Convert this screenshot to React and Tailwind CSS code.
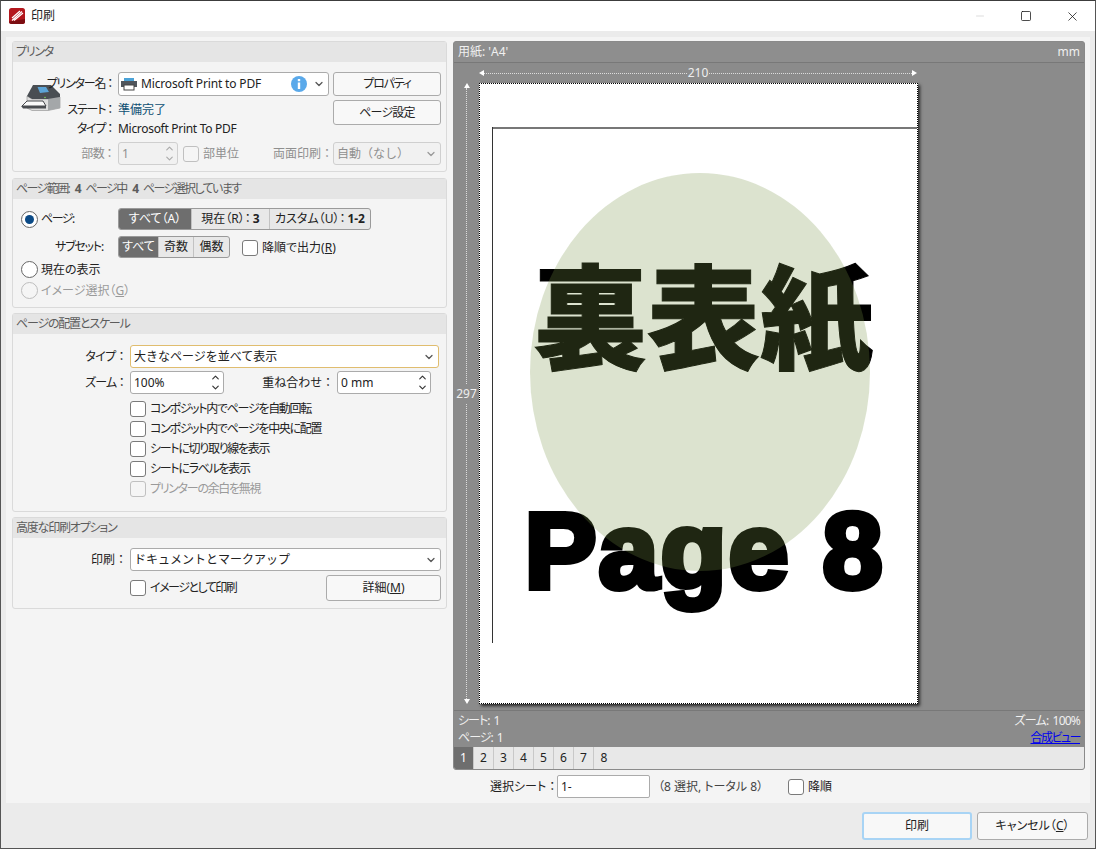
import { ChevronDown, ChevronUp, Minus, Square, X } from "lucide-react";

const FONT = "font-['Noto_Sans','Noto_Sans_CJK_JP',sans-serif] [font-feature-settings:'palt']";

const SHEETS = [1, 2, 3, 4, 5, 6, 7, 8];

const CHECKS = [
  { label: "コンポジット内でページを自動回転", h: "h-[20px]" },
  { label: "コンポジット内でページを中央に配置", h: "h-[20px]" },
  { label: "シートに切り取り線を表示", h: "h-[20px]" },
  { label: "シートにラベルを表示", h: "h-[19px]" },
  { label: "プリンターの余白を無視", h: "h-[22px]", disabled: true },
];

function AppIcon() {
  return (
    <svg width="16" height="16" viewBox="0 0 16 16" className="shrink-0">
      <rect width="16" height="16" rx="2.5" fill="#b3171d" />
      <path d="M0 13.5C0 15 1 16 2.5 16h11c1.500 0 2.500-1 2.500-2.500V11L0 13.500z" fill="#7c0e12" />
      <path d="M3 12.500 13 3.500M5 12.500 14 5M3 10 11 3" stroke="#fff" strokeWidth="1.200" fill="none" />
    </svg>
  );
}

function PrinterIcon() {
  return (
    <svg width="42" height="26" viewBox="0 0 42 26">
      <path d="M7 11 12 14H28L40 12V23L28 25.500H12L7 23z" fill="#dedede" stroke="#8a8a8a" strokeWidth="0.600" />
      <path d="M28 14 40 12V23L28 25.500z" fill="#a4a7a9" />
      <path d="M13 0H31L40 9V12L28 14H12L7 11z" fill="#494e53" />
      <path d="M17.500 2H26L29 7 20 8z" fill="#5ba3d6" />
      <circle cx="25" cy="12.500" r="0.800" fill="#7ed957" />
      <path d="M7 16H23L26 21H2z" fill="#fafafa" stroke="#33363a" strokeWidth="0.900" />
      <path d="M1 21H26V23.500H3z" fill="#4a4d51" />
    </svg>
  );
}

function TinyPrinter() {
  return (
    <svg width="16" height="14" viewBox="0 0 16 14" className="shrink-0">
      <rect x="3" y="1" width="10" height="3" fill="#4ba3d8" />
      <rect x="0" y="4" width="16" height="6" fill="#50565c" />
      <rect x="3" y="8" width="10" height="5" fill="#fff" stroke="#444" strokeWidth="1" />
    </svg>
  );
}

function InfoDot() {
  return (
    <svg width="16" height="16" viewBox="0 0 16 16" className="mr-[6px] shrink-0">
      <circle cx="8" cy="8" r="8" fill="#5aa9ea" />
      <rect x="6.800" y="3" width="2.400" height="2.200" fill="#fff" />
      <rect x="6.800" y="6.500" width="2.400" height="6.500" fill="#fff" />
    </svg>
  );
}

function Group({ title, className, children }) {
  return (
    <section className={`rounded-[3px] border border-[#dadada] bg-[#f4f4f4] ${className}`}>
      <div className="flex h-[20px] items-center bg-[#e5e5e5] pl-[3px] text-[12px] tracking-[-1.2px] text-[#5c5c5c]">
        {title}
      </div>
      {children}
    </section>
  );
}

function Check({ label, disabled, className = "" }) {
  return (
    <label className={`flex items-center gap-[4px] text-[12px] ${disabled ? "text-[#9a9a9a]" : "text-[#222]"} ${className}`}>
      <span className={`h-[16px] w-[16px] shrink-0 rounded-[3px] border ${disabled ? "border-[#c0c0c0] bg-[#f5f5f5]" : "border-[#7a7a7a] bg-white"}`} />
      <span>{label}</span>
    </label>
  );
}

function Radio({ label, checked, disabled }) {
  return (
    <div className={`flex items-center gap-[3px] text-[12px] ${disabled ? "text-[#9a9a9a]" : "text-[#222]"}`}>
      <span className={`flex h-[17px] w-[17px] shrink-0 items-center justify-center rounded-full border ${disabled ? "border-[#bdbdbd] bg-[#f5f5f5]" : "border-[#666] bg-white"}`}>
        {checked && <span className="h-[9px] w-[9px] rounded-full bg-[#0b4a86]" />}
      </span>
      <span>{label}</span>
    </div>
  );
}

function Select({ children, className = "", disabled, focus }) {
  return (
    <div
      className={`flex items-center rounded-[3px] border pl-[3px] pr-[3px] text-[12px] [font-feature-settings:normal] ${
        disabled
          ? "border-[#cfcfcf] bg-[#f1f1f1] text-[#8f8f8f]"
          : focus
            ? "border-[#e0bd6f] bg-white text-[#222]"
            : "border-[#ababab] bg-white text-[#222]"
      } ${className}`}
    >
      <span className="flex min-w-0 flex-1 items-center gap-[2px]">{children}</span>
      <ChevronDown size={12} strokeWidth={2.500} className={disabled ? "text-[#999]" : "text-[#555]"} />
    </div>
  );
}

function Spin({ value, className = "", disabled }) {
  return (
    <div
      className={`flex items-center rounded-[3px] border pl-[3px] pr-[2px] text-[12px] ${
        disabled ? "border-[#cfcfcf] bg-[#f1f1f1] text-[#8f8f8f]" : "border-[#ababab] bg-white text-[#222]"
      } ${className}`}
    >
      <span className="flex-1">{value}</span>
      <span className={`flex flex-col ${disabled ? "text-[#aaa]" : "text-[#333]"}`}>
        <ChevronUp size={11} strokeWidth={2.500} className="-mb-[1px]" />
        <ChevronDown size={11} strokeWidth={2.500} />
      </span>
    </div>
  );
}

function Btn({ children, className = "" }) {
  return (
    <button className={`flex items-center justify-center rounded-[3px] border border-[#ababab] bg-[#f8f8f8] text-[12px] text-[#222] ${className}`}>
      {children}
    </button>
  );
}

function Segments({ items, className = "" }) {
  return (
    <div className={`flex h-[22px] overflow-hidden rounded-[3px] border border-[#9a9a9a] bg-[#e8e8e8] text-[12px] text-[#222] ${className}`}>
      {items.map((item, i) => (
        <span
          key={item.label}
          className={`flex items-center justify-center border-l ${item.w} ${
            i === 0 ? "border-l-0 bg-[#6e6e6e] text-white" : "border-[#c2c2c2]"
          }`}
        >
          {item.label}
          {item.count && <b className="ml-[2px] font-bold">{item.count}</b>}
        </span>
      ))}
    </div>
  );
}

function PrinterGroup() {
  return (
    <Group title="プリンタ" className="h-[131px]">
      <div className="relative grid grid-cols-[101px_211px_108px] grid-rows-[24px_23px_19px_27px] gap-x-[4px] pt-[10px]">
        <div className="absolute left-[7px] top-[23px]">
          <PrinterIcon />
        </div>
        <div className="relative flex items-center justify-end pr-[2px] text-[12px] tracking-[-1.2px] text-[#222]">プリンター名 ：</div>
        <Select>
          <span className="-ml-[1px]">
            <TinyPrinter />
          </span>
          <span className="ml-[2px] flex-1 tracking-[-0.15px]">Microsoft Print to PDF</span>
          <InfoDot />
        </Select>
        <Btn className="tracking-[-1.2px]">プロパティ</Btn>

        <div className="mt-[4px] flex items-center justify-end pr-[2px] text-[12px] tracking-[-1.2px] text-[#222]">ステート ：</div>
        <div className="mt-[4px] flex items-center text-[12px] text-[#0c4f72]">準備完了</div>
        <Btn className="row-span-2 mt-[4px] h-[25px] tracking-[-0.8px]">ページ設定</Btn>

        <div className="flex items-center justify-end pr-[2px] text-[12px] tracking-[-1.2px] text-[#222]">タイプ ：</div>
        <div className="flex items-center text-[12px] tracking-[-0.3px] text-[#222]">Microsoft Print To PDF</div>

        <div className="col-span-3 mt-[4px] flex h-[23px] items-center text-[12px] text-[#8f8f8f]">
          <span className="w-[101px] pr-[2px] text-right tracking-[-0.6px]">部数 ：</span>
          <span className="w-[4px]" />
          <Spin value="1" disabled className="h-[23px] w-[60px]" />
          <Check label="部単位" disabled className="ml-[5px] w-[87px] !text-[#8f8f8f]" />
          <span className="w-[63px] pr-[3px] text-right">両面印刷 ：</span>
          <Select disabled className="h-[23px] w-[108px]">自動（なし）</Select>
        </div>
      </div>
    </Group>
  );
}

function RangeGroup() {
  return (
    <Group
      title={
        <span className="tracking-[-1.6px] [word-spacing:4px]">
          ページ範囲: <b>4</b> ページ中 <b>4</b> ページ選択しています
        </span>
      }
      className="mt-[6px] h-[130px]"
    >
      <div className="flex flex-col pl-[8px] pt-[9px]">
        <div className="flex h-[22px] items-center">
          <div className="w-[97px] tracking-[-1.5px]">
            <Radio label="ページ:" checked />
          </div>
          <Segments
            items={[
              { label: "すべて（A）", w: "w-[72px]" },
              { label: "現在（R）：", count: "3", w: "w-[78px]" },
              { label: "カスタム（U）：", count: "1-2", w: "w-[101px]" },
            ]}
          />
        </div>
        <div className="mt-[6px] flex h-[22px] items-center">
          <span className="w-[97px] pl-[34px] text-[12px] tracking-[-1.2px] text-[#222]">サブセット:</span>
          <Segments
            items={[
              { label: "すべて", w: "w-[39px]" },
              { label: "奇数", w: "w-[35px]" },
              { label: "偶数", w: "w-[36px]" },
            ]}
          />
          <Check
            className="ml-[12px] pt-[1px]"
            label={
              <span>
                降順で出力(<u>R</u>)
              </span>
            }
          />
        </div>
        <div className="mt-[1px] flex h-[21px] items-center">
          <Radio label="現在の表示" />
        </div>
        <div className="flex h-[21px] items-center">
          <Radio
            disabled
            label={
              <span>
                イメージ選択（<u>G</u>）
              </span>
            }
          />
        </div>
      </div>
    </Group>
  );
}

function LayoutGroup() {
  return (
    <Group title="ページの配置とスケール" className="mt-[5px] h-[199px]">
      <div className="flex flex-col pl-[117px] pt-[11px] text-[12px] text-[#222]">
        <div className="flex h-[23px] items-center">
          <span className="-ml-[60px] w-[60px] pr-[6px] text-right tracking-[-0.5px]">タイプ ：</span>
          <Select focus className="h-[23px] w-[309px]">大きなページを並べて表示</Select>
        </div>
        <div className="mt-[3px] flex h-[23px] items-center">
          <span className="-ml-[60px] w-[60px] pr-[6px] text-right tracking-[-0.8px]">ズーム ：</span>
          <Spin value="100%" className="h-[23px] w-[94px]" />
          <span className="w-[113px] pr-[6px] text-right">重ね合わせ ：</span>
          <Spin value="0 mm" className="h-[23px] w-[94px]" />
        </div>
        <div className="mt-[5px] flex flex-col tracking-[-1.3px]">
          {CHECKS.map((c) => (
            <Check key={c.label} label={c.label} disabled={c.disabled} className={c.h} />
          ))}
        </div>
      </div>
    </Group>
  );
}

function AdvancedGroup() {
  return (
    <Group title="高度な印刷オプション" className="mt-[5px] h-[92px]">
      <div className="flex flex-col pl-[117px] pt-[10px] text-[12px] text-[#222]">
        <div className="flex h-[23px] items-center">
          <span className="-ml-[60px] w-[60px] pr-[6px] text-right">印刷 ：</span>
          <Select className="h-[23px] w-[311px]">ドキュメントとマークアップ</Select>
        </div>
        <div className="mt-[4px] flex h-[26px] w-[311px] items-start justify-between">
          <Check label="イメージとして印刷" className="mt-[4px] tracking-[-1.5px]" />
          <Btn className="h-[26px] w-[115px]">
            <span>
              詳細(<u>M</u>)
            </span>
          </Btn>
        </div>
      </div>
    </Group>
  );
}

function PaperPreview() {
  return (
    <div className="relative h-[621px] w-[439px] overflow-hidden border border-dotted border-black bg-white shadow-[2px_2px_3px_rgba(0,0,0,0.7)]">
      <div className="absolute left-[12px] top-[43px] h-[2px] w-[430px] bg-[#777]" />
      <div className="absolute left-[12px] top-[43px] h-[516px] w-[1px] bg-[#333]" />
      <div className="absolute inset-x-0 top-[157px] pl-[10px] text-center font-['Noto_Sans_CJK_JP',sans-serif] text-[113px] font-black leading-[140px] text-black [-webkit-text-stroke:1px_black]">
        裏表紙
      </div>
      <div className="absolute inset-x-0 top-[405px] pl-[12px] text-center font-['Liberation_Sans',sans-serif] text-[108px] font-bold leading-[124px] tracking-[2px] text-black [-webkit-text-stroke:6px_black]">
        Page 8
      </div>
      <div className="absolute left-[50px] top-[89px] h-[398px] w-[340px] rounded-[50%] bg-[rgba(119,146,69,0.26)]" />
    </div>
  );
}

function PreviewPanel() {
  return (
    <div className="flex h-[729px] w-[632px] flex-col overflow-hidden rounded-[3px] border border-[#8a8a8a] bg-[#8b8b8b] text-[12px]">
      <div className="flex h-[21px] shrink-0 items-center justify-between border-b border-[#787878] bg-[#8e8e8e] pl-[4px] pr-[4px] text-[#f0f0f0]">
        <span>用紙: 'A4'</span>
        <span>mm</span>
      </div>
      <div className="flex h-[648px] shrink-0 flex-col border-b border-[#787878]">
        <div className="ml-[25px] flex h-[20px] w-[438px] shrink-0 items-center text-[#eee]">
          <span className="h-0 w-0 border-y-[3px] border-r-[5px] border-y-transparent border-r-white" />
          <span className="flex-1 border-t border-dotted border-[#ddd]" />
          <span className="px-[1px]">210</span>
          <span className="flex-1 border-t border-dotted border-[#ddd]" />
          <span className="h-0 w-0 border-y-[3px] border-l-[5px] border-y-transparent border-l-white" />
        </div>
        <div className="flex">
          <div className="flex h-[621px] w-[25px] shrink-0 flex-col items-center text-[#eee]">
            <span className="h-0 w-0 border-x-[3px] border-b-[5px] border-x-transparent border-b-white" />
            <span className="flex-1 border-l border-dotted border-[#ddd]" />
            <span className="py-[1px]">297</span>
            <span className="flex-1 border-l border-dotted border-[#ddd]" />
            <span className="h-0 w-0 border-x-[3px] border-t-[5px] border-x-transparent border-t-white" />
          </div>
          <PaperPreview />
        </div>
      </div>
      <div className="flex h-[36px] shrink-0 items-start justify-between pl-[4px] pr-[4px] pt-[1px] leading-[17px] text-[#f0f0f0] [word-spacing:2px]">
        <div className="tracking-[-1px]">
          <div>シート: 1</div>
          <div>ページ: 1</div>
        </div>
        <div className="text-right tracking-[-0.8px]">
          <div>ズーム: 100%</div>
          <div className="tracking-[-1.5px] text-[#0000ee] underline">合成ビュー</div>
        </div>
      </div>
      <div className="flex h-[22px] shrink-0 bg-[#e8e8e8] text-[#222]">
        {SHEETS.map((n, i) => (
          <span
            key={n}
            className={`flex w-[20px] items-center justify-center border-r border-[#c8c8c8] ${
              i === 0 ? "bg-[#6e6e6e] text-white" : ""
            } ${i === 7 ? "border-r-0" : ""}`}
          >
            {n}
          </span>
        ))}
      </div>
    </div>
  );
}

export default function App() {
  return (
    <div className={`flex h-[849px] w-[1096px] flex-col overflow-hidden whitespace-nowrap border border-x-[#555] border-b-[#555] border-t-[#3c3c3c] bg-[#ebebeb] ${FONT}`}>
      {/* Title bar */}
      <div className="flex h-[30px] shrink-0 items-center bg-white pl-[8px] text-[12px] text-[#222]">
        <AppIcon />
        <span className="ml-[6px] flex-1">印刷</span>
        <div className="flex items-center text-[#111]">
          <span className="flex w-[46px] justify-center">
            <Minus size={12} strokeWidth={1} className="text-[#bbb]" />
          </span>
          <span className="flex w-[46px] justify-center">
            <Square size={12} strokeWidth={1.500} />
          </span>
          <span className="flex w-[46px] justify-center">
            <X size={15} strokeWidth={1.200} />
          </span>
        </div>
      </div>

      {/* Main panel */}
      <div className="ml-[5px] mr-[5px] mt-[6px] flex h-[766px] w-[1084px] shrink-0 gap-[6px] bg-[#f4f4f4] px-[6px] pt-[4px]">
        <div className="flex w-[435px] shrink-0 flex-col">
          <PrinterGroup />
          <RangeGroup />
          <LayoutGroup />
          <AdvancedGroup />
        </div>
        <div className="flex flex-col">
          <PreviewPanel />
          <div className="flex h-[33px] items-center text-[12px] text-[#222]">
            <span className="ml-[37px] w-[60px] text-right">選択シート ：</span>
            <span className="ml-[7px] flex h-[23px] w-[93px] items-center rounded-[2px] border border-[#ababab] bg-white pl-[3px]">1-</span>
            <span className="ml-[8px] w-[130px] text-[#444]">（8 選択, トータル 8）</span>
            <Check label="降順" />
          </div>
        </div>
      </div>

      {/* Footer buttons */}
      <div className="flex flex-1 items-center justify-end gap-[5px] pr-[7px]">
        <Btn className="h-[28px] w-[110px] border-2 !border-[#a8d4f5]">印刷</Btn>
        <Btn className="h-[28px] w-[111px]">
          <span>
            キャンセル（<u>C</u>）
          </span>
        </Btn>
      </div>
    </div>
  );
}
